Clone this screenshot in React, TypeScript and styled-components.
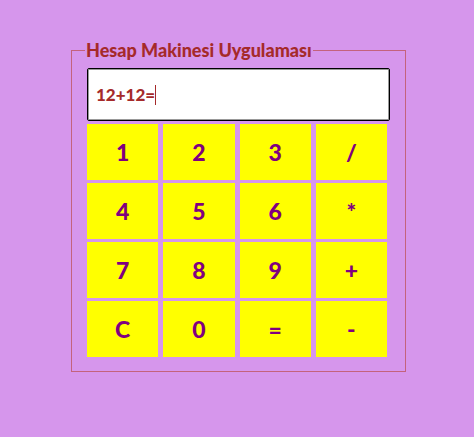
import {useState} from "react";
import styled, {createGlobalStyle} from "styled-components";

const theme = {
    colors: {
        page: "#d696ec",
        accent: "#a52a2a",
        frame: "#c4627c",
        key: "#ffff00",
        keyText: "#800080",
    },
    font: `"Gill Sans", "Gill Sans MT", Lato, sans-serif`,
}

const keys = ["1", "2", "3", "/", "4", "5", "6", "*", "7", "8", "9", "+", "C", "0", "=", "-"]

const App = () => {
    const [value, setValue] = useState("12+12=")

    const press = (key: string) => {
        setValue(key === "C" ? "" : value + key)
    }

    return (
        <>
            <GlobalStyle/>
            <StyledMain>
                <Calculator>
                    <Title>Hesap Makinesi Uygulaması</Title>
                    <Body>
                        <Screen>
                            <ScreenInput
                                aria-label="Hesap Makinesi Uygulaması"
                                value={value}
                                onChange={e => setValue(e.target.value)}
                            />
                            <Caret/>
                        </Screen>
                        <Keys>
                            {keys.map(key => (
                                <Key key={key} type="button" onClick={() => press(key)}>{key}</Key>
                            ))}
                        </Keys>
                    </Body>
                </Calculator>
            </StyledMain>
        </>
    );
};

export default App;

const GlobalStyle = createGlobalStyle`
  * {
    box-sizing: border-box;
  }

  body {
    margin: 0;
    background-color: ${theme.colors.page};
    font-family: ${theme.font};
    font-weight: 900;
  }
`

const StyledMain = styled.main`
  padding: 40px 68px 40px 71px;
`

const Calculator = styled.fieldset`
  min-width: 0;
  margin: 0;
  padding: 8px 13px 14px;
  border: 1px solid ${theme.colors.frame};
`

const Title = styled.legend`
  padding: 0 1px;
  color: ${theme.colors.accent};
  font-size: 18px;
  line-height: 20px;
  white-space: nowrap;
`

const Body = styled.div`
  padding: 0 2px;
`

const Screen = styled.label`
  display: flex;
  align-items: center;
  height: 53px;
  padding: 0 8px;
  overflow: hidden;
  background-color: #fff;
  border: 1px solid #000;
  border-radius: 2px;
  outline: 1px solid #00000066;
  outline-offset: -2px;
`

const ScreenInput = styled.input`
  field-sizing: content;
  min-width: 0;
  padding: 0;
  border: none;
  outline: none;
  background: none;
  color: ${theme.colors.accent};
  caret-color: transparent;
  font: inherit;
  font-size: 17px;
`

const Caret = styled.span`
  flex: none;
  width: 1px;
  height: 20px;
  background-color: ${theme.colors.accent};
`

const Keys = styled.div`
  display: grid;
  grid-template-columns: repeat(4, 1fr);
  grid-auto-rows: 56px;
  gap: 3px 5px;
  margin: 3px 3px 0 0;
`

const Key = styled.button`
  padding: 0;
  border: none;
  background-color: ${theme.colors.key};
  color: ${theme.colors.keyText};
  font: inherit;
  font-size: 23px;
  cursor: pointer;
`
